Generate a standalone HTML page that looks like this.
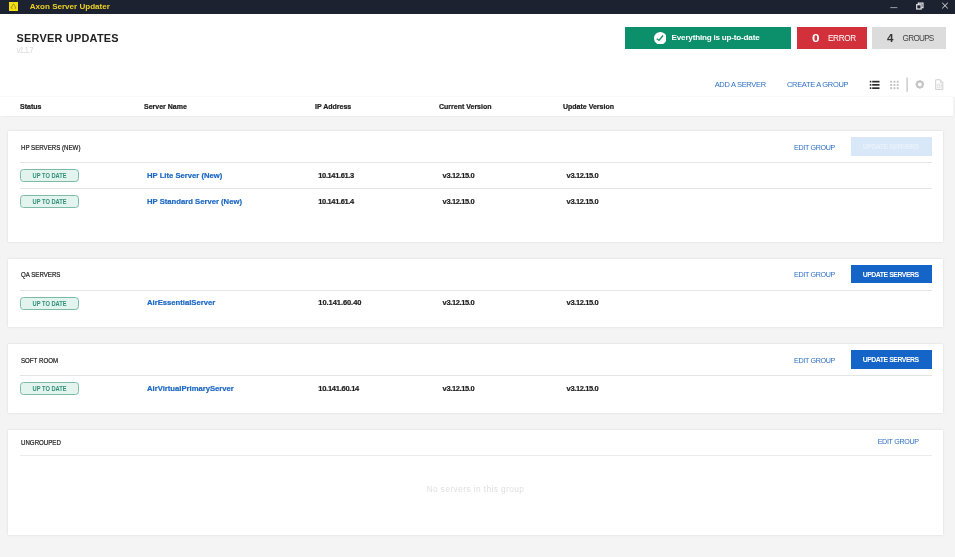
<!DOCTYPE html>
<html><head><meta charset="utf-8">
<style>
*{box-sizing:border-box;margin:0;padding:0}
html,body{width:955px;height:557px;overflow:hidden;background:#f4f4f4;font-family:"Liberation Sans",sans-serif;color:#222}
.abs{position:absolute}
#tb{position:absolute;left:0;top:0;width:955px;height:14px;background:#1d2230}
#tb .ttl{position:absolute;left:29.8px;top:-.4px;line-height:13px;font-size:8.05px;color:#ecd223;font-weight:bold;white-space:nowrap}
#hdr{position:absolute;left:0;top:14px;width:955px;height:102px;background:#fff;box-shadow:0 .5px 1px rgba(0,0,0,.03)}
h1{position:absolute;left:16.5px;top:31.3px;font-size:10.9px;line-height:14px;font-weight:bold;color:#222;letter-spacing:.25px;white-space:nowrap}
.ver{position:absolute;left:16.5px;top:46.1px;font-size:8.2px;line-height:10px;color:#dcdcdc;letter-spacing:-1px}
.btn{position:absolute;top:27px;height:22px;line-height:22px;font-size:8px;white-space:nowrap}
.lnk{position:absolute;font-size:7.5px;color:#2e70c4;line-height:10px;white-space:nowrap;letter-spacing:-.32px}
.th{-webkit-text-stroke:.22px #222;position:absolute;top:102px;font-size:7px;font-weight:bold;line-height:10px;color:#222;white-space:nowrap}
.card{position:absolute;left:8px;width:935px;background:#fff;box-shadow:0 0 2px rgba(0,0,0,.12)}
.gt{-webkit-text-stroke:.22px #222;position:absolute;left:13px;top:11.4px;font-size:7.4px;line-height:10px;color:#222;white-space:nowrap;transform:scaleX(.83);transform-origin:0 50%}
.sep{position:absolute;left:12px;width:912px;height:1px;background:#e4e4e4}
.badge{position:absolute;left:12px;width:59px;height:13px;border:1px solid #7dbba8;border-radius:3.5px;background:#e3f4ef;color:#2f8f76;font-size:6.6px;line-height:11px;text-align:center;font-weight:bold}
.badge span{display:inline-block;transform:scaleX(.87)}
.sn{-webkit-text-stroke:.2px #1c68c4;position:absolute;left:139px;margin-top:.7px;font-size:7.68px;font-weight:bold;color:#1c68c4;line-height:10px;white-space:nowrap}
.c{-webkit-text-stroke:.2px #222;position:absolute;margin-top:.6px;font-size:7.5px;font-weight:bold;color:#222;line-height:10px;white-space:nowrap;letter-spacing:-.38px}
.ub{position:absolute;left:843px;top:6px;width:81px;height:18.6px;background:#1565c8;color:#fff;font-size:6.9px;font-weight:bold;line-height:19.6px;text-align:center;letter-spacing:-.46px;text-indent:-1.6px}
.eg{position:absolute;left:786px;top:11.3px;font-size:7.15px;color:#2e70c4;line-height:10px;white-space:nowrap;letter-spacing:-.33px}
</style></head><body><div id="wrap" style="position:absolute;left:0;top:0;width:955px;height:557px;will-change:transform">
<div id="tb">
<svg class="abs" style="left:9px;top:2px" width="9.2" height="9.2" viewBox="0 0 9.2 9.2"><rect width="9.2" height="9.2" fill="#f6df14"/><path d="M4.5 1.7L7 6.1M4.5 1.7L1.9 6.1M2.2 6.3H3.6M5.6 6.3H6.9" fill="none" stroke="#5a4e10" stroke-width=".65" opacity=".75"/></svg>
<div class="ttl">Axon Server Updater</div>
<svg class="abs" style="left:885px;top:0" width="70" height="14" viewBox="0 0 70 14"><g fill="none"><path d="M5.3 7.6h7" stroke="#a9acb4" stroke-width=".9"/><g stroke="#e4e4e6" stroke-width="1.2"><rect x="31.7" y="4.7" width="4.4" height="4.3"/><path d="M33.3 4.4V3.1h4.7v4.5h-1.6"/><path d="M57.2 2.8l5.6 5.6M62.8 2.8l-5.6 5.6" stroke-width="1"/></g></g></svg>
</div>
<div id="hdr"></div><div class="abs" style="left:0;top:96px;width:953px;height:1px;background:#f8f8f8"></div><div class="abs" style="left:953px;top:97px;width:2px;height:21px;background:#f3f3f3"></div>
<h1>SERVER UPDATES</h1>
<div class="ver">v1.1.7</div>

<div class="btn" style="left:625px;width:166px;background:#0c8f6b;color:#fff;font-weight:bold"><span class="abs" style="left:46.6px;font-size:8.1px;letter-spacing:-.2px">Everything is up-to-date</span>
<svg class="abs" style="left:28.5px;top:4.8px" width="12.6" height="12.6" viewBox="0 0 12.6 12.6"><circle cx="6.3" cy="6.3" r="6.3" fill="#fff"/><path d="M2.7 6.7l2.3 1.6 4.1-4.8" fill="none" stroke="#1b8f6e" stroke-width="1.3"/></svg></div>
<div class="btn" style="left:797px;width:70px;background:#d2303a;color:#fff"><b class="abs" style="left:14.5px;font-size:10.5px;transform:scaleX(1.3);transform-origin:0 50%">0</b><span class="abs" style="left:31px;top:.9px;font-size:8.2px;letter-spacing:-.35px">ERROR</span></div>
<div class="btn" style="left:872px;width:74px;background:#dcdcdc;color:#333"><b class="abs" style="left:14.5px;font-size:10.5px;transform:scaleX(1.1);transform-origin:0 50%">4</b><span class="abs" style="left:30.6px;top:.9px;font-size:8.2px;letter-spacing:-.75px;color:#444">GROUPS</span></div>

<div class="lnk" style="left:714.7px;top:79.5px">ADD A SERVER</div>
<div class="lnk" style="left:787px;top:79.5px">CREATE A GROUP</div>
<svg class="abs" style="left:868px;top:77px" width="80" height="16" viewBox="0 0 80 16">
<g fill="#2b2b2b"><rect x="1.8" y="3.8" width="1.5" height="1.7"/><rect x="4.2" y="3.8" width="7.3" height="1.7"/><rect x="1.8" y="7" width="1.5" height="1.7"/><rect x="4.2" y="7" width="7.3" height="1.7"/><rect x="1.8" y="10.3" width="1.5" height="1.7"/><rect x="4.2" y="10.3" width="7.3" height="1.7"/></g>
<g fill="#c2c2c2"><rect x="22.2" y="3.8" width="1.9" height="1.9"/><rect x="25.5" y="3.8" width="1.9" height="1.9"/><rect x="28.8" y="3.8" width="1.9" height="1.9"/><rect x="22.2" y="7" width="1.9" height="1.9"/><rect x="25.5" y="7" width="1.9" height="1.9"/><rect x="28.8" y="7" width="1.9" height="1.9"/><rect x="22.2" y="10.2" width="1.9" height="1.9"/><rect x="25.5" y="10.2" width="1.9" height="1.9"/><rect x="28.8" y="10.2" width="1.9" height="1.9"/></g>
<rect x="38.4" y="0.6" width="1.4" height="14.2" fill="#c9c9c9"/>
<g transform="translate(51.85 7.4)"><circle r="2.9" fill="none" stroke="#c4c4c4" stroke-width="2.1"/><circle r="3.7" fill="none" stroke="#c6c6c6" stroke-width="1.3" stroke-dasharray="1.45 1.456" transform="rotate(-14)"/></g>
<g fill="none" stroke="#c8c8c8" stroke-width=".9"><path d="M67.7 2.8h4.6l2.5 2.6v7h-7.1z"/><path d="M72.3 2.8v2.6h2.5" stroke-width=".7"/><path d="M69.2 7h4.2v3.8h-4.2zM69.2 8.9h4.2M71.3 7v3.8" stroke-width=".6" stroke="#d6d6d6"/></g>
</svg>

<div class="th" style="left:20px">Status</div>
<div class="th" style="left:144px">Server Name</div>
<div class="th" style="left:315px">IP Address</div>
<div class="th" style="left:439px">Current Version</div>
<div class="th" style="left:563px">Update Version</div>

<div class="card" style="top:131.3px;height:111px">
<div class="gt">HP SERVERS (NEW)</div><div class="eg">EDIT GROUP</div><div class="ub" style="background:#d9e8f8;color:#e9f1fb">UPDATE SERVERS</div>
<div class="sep" style="top:31px"></div>
<div class="badge" style="top:38px"><span>UP TO DATE</span></div><div class="sn" style="top:39px">HP Lite Server (New)</div><div class="c" style="left:310.3px;top:39px">10.141.61.3</div><div class="c" style="left:434.6px;top:39px">v3.12.15.0</div><div class="c" style="left:558.6px;top:39px">v3.12.15.0</div>
<div class="sep" style="top:57px"></div>
<div class="badge" style="top:64px"><span>UP TO DATE</span></div><div class="sn" style="top:65px">HP Standard Server (New)</div><div class="c" style="left:310.3px;top:65px">10.141.61.4</div><div class="c" style="left:434.6px;top:65px">v3.12.15.0</div><div class="c" style="left:558.6px;top:65px">v3.12.15.0</div>
</div>

<div class="card" style="top:258.7px;height:68.8px">
<div class="gt">QA SERVERS</div><div class="eg">EDIT GROUP</div><div class="ub">UPDATE SERVERS</div>
<div class="sep" style="top:31px"></div>
<div class="badge" style="top:38px"><span>UP TO DATE</span></div><div class="sn" style="top:39px">AirEssentialServer</div><div class="c" style="left:310.3px;top:39px;letter-spacing:-.06px">10.141.60.40</div><div class="c" style="left:434.6px;top:39px">v3.12.15.0</div><div class="c" style="left:558.6px;top:39px">v3.12.15.0</div>
</div>

<div class="card" style="top:344.3px;height:68.8px">
<div class="gt">SOFT ROOM</div><div class="eg">EDIT GROUP</div><div class="ub">UPDATE SERVERS</div>
<div class="sep" style="top:31px"></div>
<div class="badge" style="top:38px"><span>UP TO DATE</span></div><div class="sn" style="top:39px">AirVirtualPrimaryServer</div><div class="c" style="left:310.3px;top:39px;letter-spacing:-.26px">10.141.60.14</div><div class="c" style="left:434.6px;top:39px">v3.12.15.0</div><div class="c" style="left:558.6px;top:39px">v3.12.15.0</div>
</div>

<div class="card" style="top:429.8px;height:105.5px">
<div class="gt" style="top:8px">UNGROUPED</div><div class="eg" style="left:869.7px;top:7.2px">EDIT GROUP</div>
<div class="sep" style="top:25px;background:#ebebeb"></div>
<div class="abs" style="left:0;width:935px;top:54.6px;text-align:center;font-size:8.3px;line-height:10px;color:#dedede;letter-spacing:.42px">No servers in this group</div>
</div>
</div></body></html>
